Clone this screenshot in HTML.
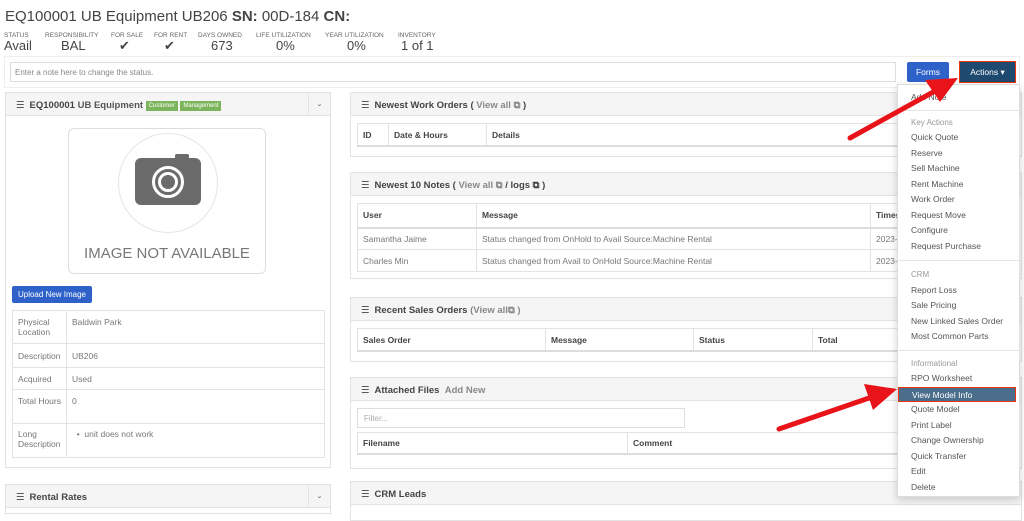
<!DOCTYPE html><html><head><style>
*{box-sizing:border-box;margin:0;padding:0}
body{width:1024px;height:509px;overflow:hidden;background:#fff;font-family:"Liberation Sans",sans-serif;color:#555;position:relative;font-size:9px}
.a{position:absolute}
.pan{position:absolute;border:1px solid #e3e3e3;background:#fff}
.hd{position:absolute;left:0;right:0;top:0;height:23px;background:#f5f5f5;border-bottom:1px solid #e3e3e3;font-weight:bold;font-size:9.5px;color:#444;padding:7px 0 0 10px}
.hd .m{font-weight:normal;margin-right:5px}
.lk{color:#888}
table{border-collapse:collapse;position:absolute}
td,th{border:1px solid #e3e3e3;text-align:left;padding:0 5px;font-size:8.5px}
th{color:#444;border-bottom:2px solid #ddd}
.lbl{font-size:6.5px;color:#666;top:32px;text-align:center}
.val{font-size:13px;color:#444;top:38px;text-align:center}
.dd div{height:15.5px;line-height:15.5px;padding-left:13px;font-size:8.5px;color:#555}
.dd .h{color:#999;font-size:8px}
.sep{border-top:1px solid #e5e5e5;height:0!important;margin:4px 0}
.bd{background:#7cb45b;color:#fff;font-size:6px;padding:2px 3px;font-weight:normal;vertical-align:1px}
</style></head><body>
<div class="a" style="left:5px;top:8px;font-size:15px;color:#444">EQ100001 UB Equipment UB206 <b>SN:</b> 00D-184 <b>CN:</b></div>
<div class="a lbl" style="left:4px">STATUS</div><div class="a val" style="left:4px">Avail</div>
<div class="a lbl" style="left:45px">RESPONSIBILITY</div><div class="a val" style="left:61px">BAL</div>
<div class="a lbl" style="left:111px">FOR SALE</div><div class="a val" style="left:119px">✔</div>
<div class="a lbl" style="left:154px">FOR RENT</div><div class="a val" style="left:164px">✔</div>
<div class="a lbl" style="left:198px">DAYS OWNED</div><div class="a val" style="left:211px">673</div>
<div class="a lbl" style="left:256px">LIFE UTILIZATION</div><div class="a val" style="left:276px">0%</div>
<div class="a lbl" style="left:325px">YEAR UTILIZATION</div><div class="a val" style="left:347px">0%</div>
<div class="a lbl" style="left:398px">INVENTORY</div><div class="a val" style="left:401px">1 of 1</div>
<div class="a" style="left:4px;top:56px;width:1016px;height:32px;border:1px solid #eee"></div>
<div class="a" style="left:10px;top:62px;width:886px;height:20px;border:1px solid #ddd;font-size:8px;color:#888;padding:5px 4px">Enter a note here to change the status.</div>
<div class="a" style="left:907px;top:62px;width:42px;height:20px;background:#2f62c9;color:#fff;font-size:8.5px;text-align:center;line-height:20px;border-radius:2px">Forms</div>
<div class="a" style="left:959px;top:61px;width:57px;height:22px;background:#1f4a70;color:#fff;font-size:8.5px;text-align:center;line-height:20px;border:1px solid #e31;">Actions ▾</div>

<div class="pan" style="left:5px;top:92px;width:326px;height:376px">
<div class="hd"><span class="m">☰</span>EQ100001 <span style="font-weight:bold;color:#555">UB Equipment</span> <span class="bd">Customer</span> <span class="bd">Management</span></div>
<div class="a" style="right:0;top:0;width:22px;height:23px;border-left:1px solid #e3e3e3;text-align:center;line-height:23px;font-size:7px">⌄</div>
<div class="a" style="left:62px;top:35px;width:198px;height:146px;border:1px solid #ddd;border-radius:6px">
<div class="a" style="left:49px;top:4px;width:100px;height:100px;border-radius:50%;border:1px solid #e5e5e5"></div>
<div class="a" style="left:66px;top:29px;width:66px;height:47px;background:#6b6b6b;border-radius:6px"></div>
<div class="a" style="left:106px;top:25px;width:14px;height:6px;background:#6b6b6b;border-radius:2px"></div>
<div class="a" style="left:83px;top:37px;width:32px;height:32px;border-radius:50%;border:3px solid #fff"></div>
<div class="a" style="left:89px;top:43px;width:20px;height:20px;border-radius:50%;border:3px solid #fff"></div>
<div class="a" style="left:0;width:100%;top:116px;text-align:center;font-size:15px;color:#777">IMAGE NOT AVAILABLE</div></div>
<div class="a" style="left:6px;top:193px;width:80px;height:17px;background:#2f62c9;color:#fff;font-size:8px;line-height:17px;text-align:center;border-radius:2px">Upload New Image</div>
<table style="left:6px;top:217px;width:313px;color:#777">
<tr style="height:33px"><td style="width:54px;vertical-align:top;padding-top:6px">Physical Location</td><td style="vertical-align:top;padding-top:6px">Baldwin Park</td></tr>
<tr style="height:24px"><td>Description</td><td>UB206</td></tr>
<tr style="height:22px"><td>Acquired</td><td>Used</td></tr>
<tr style="height:34px"><td style="vertical-align:top;padding-top:6px">Total Hours</td><td style="vertical-align:top;padding-top:6px">0</td></tr>
<tr style="height:34px"><td style="vertical-align:top;padding-top:5px">Long Description</td><td style="vertical-align:top;padding-top:5px">&nbsp; • &nbsp;unit does not work</td></tr></table>
</div>
<div class="pan" style="left:5px;top:484px;width:326px;height:30px"><div class="hd"><span class="m">☰</span>Rental Rates</div><div class="a" style="right:0;top:0;width:22px;height:23px;border-left:1px solid #e3e3e3;text-align:center;line-height:23px;font-size:7px">⌄</div></div>

<div class="pan" style="left:350px;top:92px;width:672px;height:65px"><div class="hd"><span class="m">☰</span>Newest Work Orders ( <span class="lk">View all ⧉</span> )</div>
<table style="left:6px;top:30px;width:660px;height:24px"><tr><th style="width:31px">ID</th><th style="width:98px">Date &amp; Hours</th><th>Details</th></tr></table></div>
<div class="pan" style="left:350px;top:172px;width:672px;height:107px"><div class="hd"><span class="m">☰</span>Newest 10 Notes ( <span class="lk">View all ⧉</span> / logs ⧉ )</div>
<table style="left:6px;top:30px;width:660px;color:#777"><tr style="height:24px"><th style="width:119px">User</th><th style="width:394px">Message</th><th>Times</th></tr>
<tr style="height:22px"><td>Samantha Jaime</td><td>Status changed from OnHold to Avail Source:Machine Rental</td><td>2023-</td></tr>
<tr style="height:22px"><td>Charles Min</td><td>Status changed from Avail to OnHold Source:Machine Rental</td><td>2023-</td></tr></table></div>
<div class="pan" style="left:350px;top:297px;width:672px;height:65px"><div class="hd"><span class="m">☰</span>Recent Sales Orders <span class="lk">(View all⧉ )</span></div>
<table style="left:6px;top:30px;width:660px;height:24px"><tr><th style="width:188px">Sales Order</th><th style="width:148px">Message</th><th style="width:119px">Status</th><th>Total</th></tr></table></div>
<div class="pan" style="left:350px;top:377px;width:672px;height:92px"><div class="hd"><span class="m">☰</span>Attached Files &nbsp;<span class="lk">Add New</span></div>
<div class="a" style="left:6px;top:30px;width:328px;height:20px;border:1px solid #ddd;font-size:8px;color:#aaa;padding:5px 6px">Filter...</div>
<table style="left:6px;top:54px;width:660px;height:23px"><tr><th style="width:270px">Filename</th><th>Comment</th></tr></table></div>
<div class="pan" style="left:350px;top:481px;width:672px;height:40px"><div class="hd"><span class="m">☰</span>CRM Leads</div></div>

<div class="a dd" style="left:897px;top:84px;width:123px;height:413px;background:#fff;border:1px solid #ddd;box-shadow:0 3px 8px rgba(0,0,0,.18);padding-top:5px">
<div>Add Note</div><div class="sep"></div>
<div class="h">Key Actions</div><div>Quick Quote</div><div>Reserve</div><div>Sell Machine</div><div>Rent Machine</div><div>Work Order</div><div>Request Move</div><div>Configure</div><div>Request Purchase</div><div class="sep" style="margin:6px 0"></div>
<div class="h">CRM</div><div>Report Loss</div><div>Sale Pricing</div><div>New Linked Sales Order</div><div>Most Common Parts</div><div class="sep" style="margin:5px 0"></div>
<div class="h">Informational</div><div>RPO Worksheet</div><div style="background:#4a6d8c;color:#fff;border:1.5px solid #e31;margin-right:3px">View Model Info</div><div>Quote Model</div><div>Print Label</div><div>Change Ownership</div><div>Quick Transfer</div><div>Edit</div><div>Delete</div></div>

<svg class="a" style="left:0;top:0" width="1024" height="509">
<line x1="850" y1="138" x2="935" y2="91" stroke="#e8141a" stroke-width="5" stroke-linecap="round"/>
<polygon points="958,78 925,80 940,102" fill="#e8141a"/>
<line x1="779" y1="429" x2="872" y2="397" stroke="#e8141a" stroke-width="5" stroke-linecap="round"/>
<polygon points="897,389 864,384 873,410" fill="#e8141a"/>
</svg>
</body></html>
